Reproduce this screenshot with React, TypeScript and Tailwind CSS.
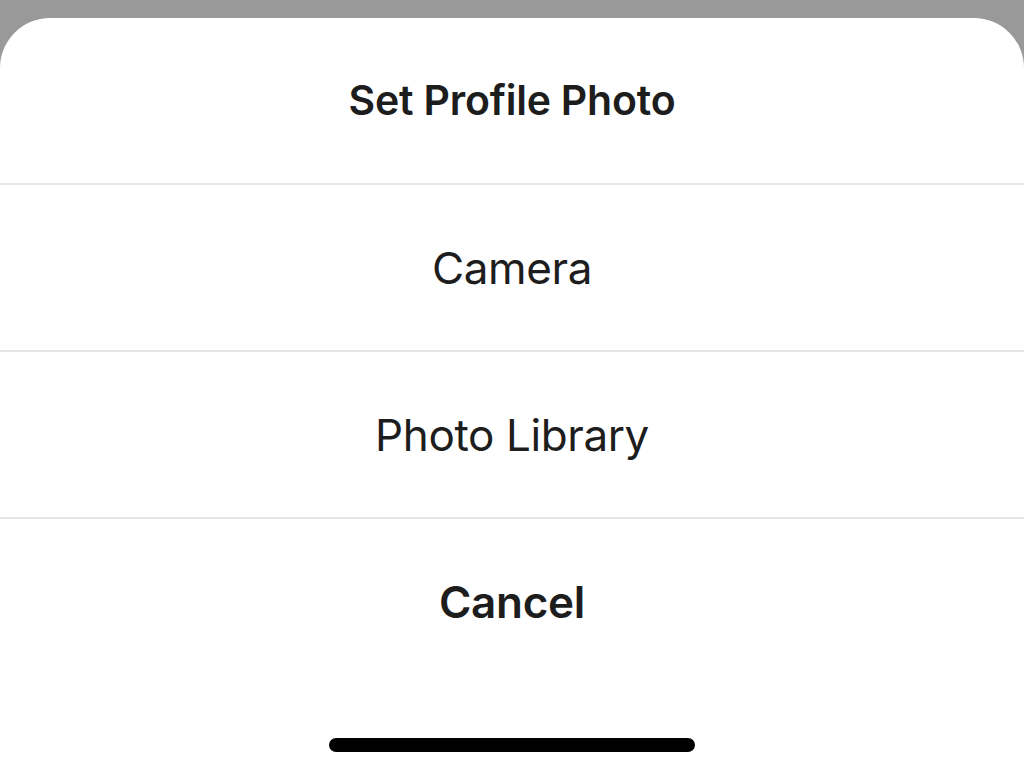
export default function App() {
  const rows = [
    { label: 'Camera', bold: false },
    { label: 'Photo Library', bold: false },
  ];

  return (
    <div className="flex h-[775px] w-[1024px] flex-col overflow-hidden bg-[#999999] font-['Inter',sans-serif] text-[#1d1d1d]">
      <div className="mt-[18px] flex flex-1 flex-col rounded-t-[50px] bg-white">
        {/* Sheet title */}
        <div className="flex h-[165px] items-center justify-center">
          <h1 className="text-[41px] font-semibold tracking-[-0.2px]">Set Profile Photo</h1>
        </div>

        {rows.map((row) => (
          <button
            key={row.label}
            className="flex h-[167px] items-center justify-center border-t-2 border-[#e6e6e6] text-[44px] font-normal tracking-[-0.4px]"
          >
            {row.label}
          </button>
        ))}

        <button className="flex h-[167px] items-center justify-center border-t-2 border-[#e6e6e6] text-[44px] font-semibold tracking-[-0.3px]">
          Cancel
        </button>

        {/* Home indicator */}
        <div className="flex flex-1 items-start justify-center pt-[54px]">
          <div className="h-[14px] w-[366px] rounded-full bg-black" />
        </div>
      </div>
    </div>
  );
}
